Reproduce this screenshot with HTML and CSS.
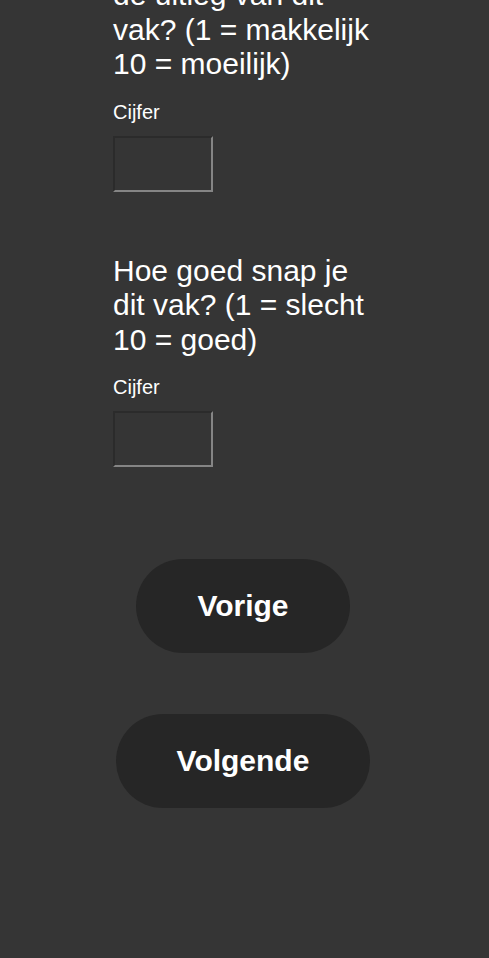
FILE: index.html
```html
<!DOCTYPE html>
<html lang="nl">
<head>
<meta charset="utf-8">
<title>Vragenlijst</title>
<link rel="stylesheet" href="styles.css">
</head>
<body>
<main class="form">
  <section class="question question-first">
    <h2 class="question-title">de uitleg van dit vak? (1 = makkelijk 10 = moeilijk)</h2>
    <label class="field-label" for="q1">Cijfer</label>
    <input class="field-input" id="q1" type="text">
  </section>
  <section class="question">
    <h2 class="question-title">Hoe goed snap je dit vak? (1 = slecht 10 = goed)</h2>
    <label class="field-label" for="q2">Cijfer</label>
    <input class="field-input" id="q2" type="text">
  </section>
  <div class="nav">
    <button class="nav-button" type="button">Vorige</button>
    <button class="nav-button" type="button">Volgende</button>
  </div>
</main>
</body>
</html>
```

FILE: styles.css
```css
html, body {
  margin: 0;
  padding: 0;
  background: #353535;
  color: #ffffff;
  font-family: "Liberation Sans", Arial, sans-serif;
}

body {
  min-height: 958px;
  overflow: hidden;
}

.form {
  width: 263px;
  margin: 0 auto;
  display: flex;
  flex-direction: column;
}

.question {
  display: flex;
  flex-direction: column;
  align-items: flex-start;
  margin-top: 62px;
}

.question-first {
  margin-top: -22px;
}

.question-title {
  margin: 0;
  font-size: 30px;
  font-weight: normal;
  line-height: 34.5px;
}

.field-label {
  display: block;
  margin-top: 19px;
  font-size: 20px;
  line-height: 23px;
}

.field-input {
  box-sizing: border-box;
  width: 100px;
  height: 56px;
  margin: 12px 0 0 0;
  padding: 0;
  background: transparent;
  color: #ffffff;
  border: 2px solid #858585;
  border-top-color: #2b2b2b;
  border-left-color: #2b2b2b;
  font-family: inherit;
  font-size: 20px;
}

.nav {
  display: flex;
  flex-direction: column;
  align-items: center;
  gap: 61px;
  margin-top: 92px;
  margin-left: -23px;
  margin-right: -20px;
}

.nav-button {
  background: #262626;
  color: #ffffff;
  border: none;
  border-radius: 48px;
  padding: 30px 61px;
  font-family: "Liberation Sans", Arial, sans-serif;
  font-size: 30px;
  font-weight: bold;
  line-height: 34px;
  cursor: pointer;
}
```
